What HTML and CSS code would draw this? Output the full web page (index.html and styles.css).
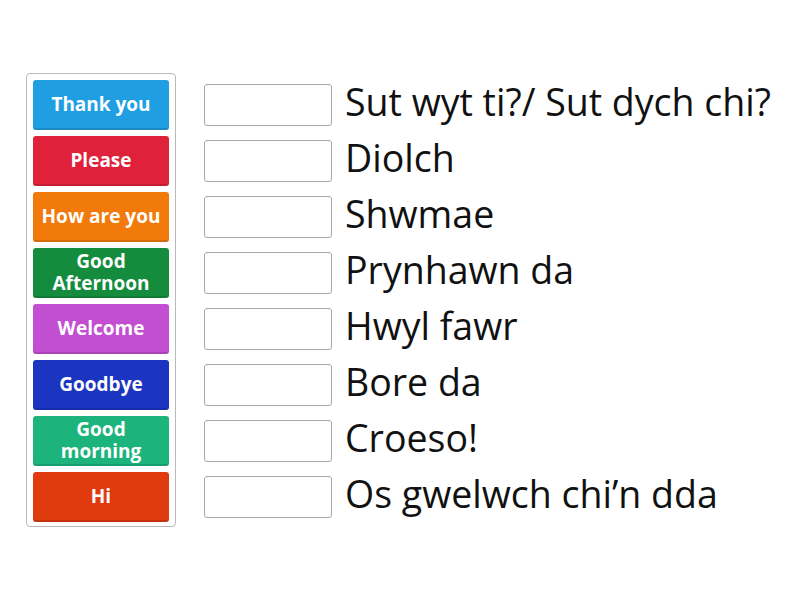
FILE: index.html
```html
<!DOCTYPE html>
<html>
<head>
<meta charset="utf-8">
<link rel="stylesheet" href="styles.css">
</head>
<body>
<div class="page">
  <div class="bank">
    <div class="tile c1">Thank you</div>
    <div class="tile c2">Please</div>
    <div class="tile c3">How are you</div>
    <div class="tile c4">Good Afternoon</div>
    <div class="tile c5">Welcome</div>
    <div class="tile c6">Goodbye</div>
    <div class="tile c7">Good morning</div>
    <div class="tile c8">Hi</div>
  </div>
  <div class="rows">
    <div class="row"><div class="slot"></div><div class="label">Sut wyt ti?/ Sut dych chi?</div></div>
    <div class="row"><div class="slot"></div><div class="label">Diolch</div></div>
    <div class="row"><div class="slot"></div><div class="label">Shwmae</div></div>
    <div class="row"><div class="slot"></div><div class="label">Prynhawn da</div></div>
    <div class="row"><div class="slot"></div><div class="label">Hwyl fawr</div></div>
    <div class="row"><div class="slot"></div><div class="label">Bore da</div></div>
    <div class="row"><div class="slot"></div><div class="label">Croeso!</div></div>
    <div class="row"><div class="slot"></div><div class="label">Os gwelwch chi’n dda</div></div>
  </div>
</div>
</body>
</html>
```

FILE: styles.css
```css
html, body {
  margin: 0;
  padding: 0;
  background: #ffffff;
}
body {
  font-family: "Open Sans", "Liberation Sans", sans-serif;
  width: 800px;
  height: 600px;
  overflow: hidden;
}
.page {
  display: flex;
  align-items: flex-start;
  padding: 73px 0 0 26px;
}
.bank {
  display: flex;
  flex-direction: column;
  gap: 6px;
  padding: 6px 6px 4px 6px;
  border: 1px solid #b9b9b9;
  border-radius: 4px;
  width: 136px;
}
.tile {
  height: 50px;
  border-radius: 3px;
  color: #ffffff;
  font-weight: 700;
  font-size: 19px;
  line-height: 22px;
  display: flex;
  align-items: center;
  justify-content: center;
  text-align: center;
  padding: 0 4px 2px;
  box-sizing: border-box;
  box-shadow: inset 0 -2px 0 rgba(0,0,0,0.12);
}
.c1 { background: #1f9fe2; }
.c2 { background: #e0213a; }
.c3 { background: #f27a0b; }
.c4 { background: #148b3d; }
.c5 { background: #c24fd1; }
.c6 { background: #1b35c1; }
.c7 { background: #1cb47c; }
.c8 { background: #df3b0f; }
.rows {
  display: flex;
  flex-direction: column;
  margin-left: 28px;
  margin-top: 4px;
}
.row {
  height: 56px;
  display: flex;
  align-items: center;
}
.slot {
  width: 128px;
  height: 42px;
  box-sizing: border-box;
  border: 1px solid #a8a8a8;
  border-radius: 3px;
  background: #fff;
  flex: none;
}
.label {
  margin-left: 13px;
  margin-bottom: 6px;
  font-size: 37.5px;
  color: #111111;
  white-space: nowrap;
  line-height: 42px;
}
```
